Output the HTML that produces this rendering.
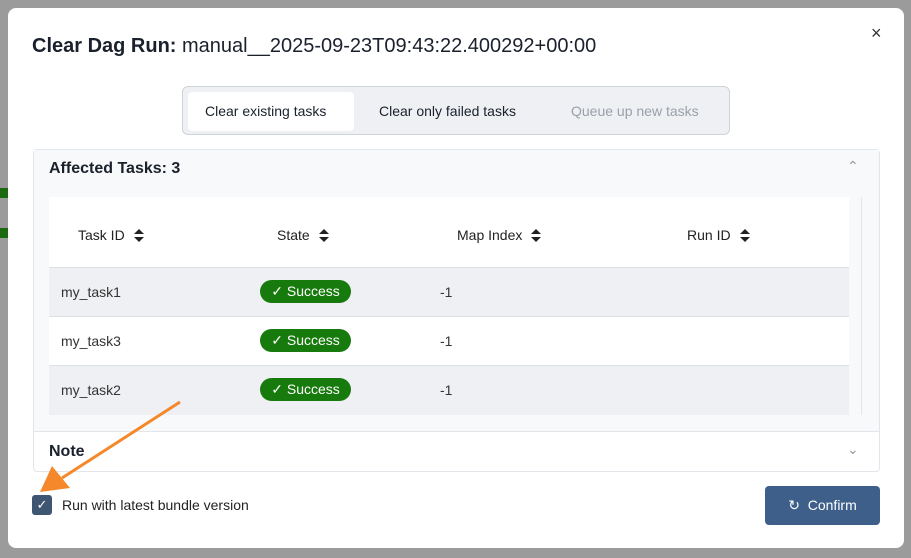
<!DOCTYPE html>
<html><head><style>
*{box-sizing:border-box;margin:0;padding:0}
body{width:911px;height:558px;background:#9b9b9b;font-family:"Liberation Sans",sans-serif;position:relative;overflow:hidden;color:#1a202c}
.a{position:absolute}
.modal{left:8px;top:8px;width:896px;height:540px;background:#fff;border-radius:8px}
.tab{font-size:14px;color:#1a202c;top:103px}
.badge{background:#177a0c;color:#fff;font-size:14px;border-radius:12px;width:91px;height:23px;line-height:23px;text-align:center}
.cell{font-size:14px;color:#333}
.th{font-size:14px;color:#222}
.sort{display:inline-block;vertical-align:middle;margin-left:9px;width:10px;height:14px;position:relative}
.sort:before{content:"";position:absolute;left:0;top:0;border:5px solid transparent;border-bottom:5px solid #222;border-top:0}
.sort:after{content:"";position:absolute;left:0;top:8px;border:5px solid transparent;border-top:5px solid #222;border-bottom:0}
</style></head><body>
<div class="a" style="left:0;top:188px;width:8px;height:10px;background:#1a6a12"></div>
<div class="a" style="left:0;top:228px;width:8px;height:10px;background:#1a6a12"></div>
<div class="a modal"></div>
<div class="a" style="left:871px;top:23px;font-size:18px;color:#333">×</div>
<div class="a" style="left:32px;top:35px;font-size:20px;color:#1a202c"><b>Clear Dag Run:</b> manual__2025-09-23T09:43:22.400292+00:00</div>
<div class="a" style="left:182px;top:86px;width:548px;height:49px;background:#eef0f3;border:1px solid #cfd4da;border-radius:6px"></div>
<div class="a" style="left:188px;top:92px;width:166px;height:39px;background:#fff;border-radius:4px"></div>
<div class="a tab" style="left:205px">Clear existing tasks</div>
<div class="a tab" style="left:379px">Clear only failed tasks</div>
<div class="a tab" style="left:571px;color:#9aa0aa">Queue up new tasks</div>
<div class="a" style="left:33px;top:149px;width:847px;height:323px;border:1px solid #e2e5e9;border-radius:4px;background:#fff"></div>
<div class="a" style="left:34px;top:150px;width:845px;height:281px;background:#f8f9fa"></div>
<div class="a" style="left:49px;top:160px;font-size:16px;font-weight:bold">Affected Tasks: 3</div>
<div class="a" style="left:847px;top:158px;font-size:14px;color:#999">&#8963;</div>
<div class="a" style="left:49px;top:197px;width:800px;height:218px;background:#fff"></div>
<div class="a" style="left:861px;top:197px;width:1px;height:218px;background:#e2e5e9"></div>
<div class="a th" style="left:78px;top:227px">Task ID<span class="sort"></span></div>
<div class="a th" style="left:277px;top:227px">State<span class="sort"></span></div>
<div class="a th" style="left:457px;top:227px">Map Index<span class="sort"></span></div>
<div class="a th" style="left:687px;top:227px">Run ID<span class="sort"></span></div>
<div class="a" style="left:49px;top:267px;width:800px;height:50px;background:#eef0f3;border-top:1px solid #dde1e6"></div>
<div class="a" style="left:49px;top:316px;width:800px;height:50px;background:#fff;border-top:1px solid #dde1e6"></div>
<div class="a" style="left:49px;top:365px;width:800px;height:50px;background:#eef0f3;border-top:1px solid #dde1e6"></div>
<div class="a cell" style="left:61px;top:284px">my_task1</div>
<div class="a cell" style="left:61px;top:333px">my_task3</div>
<div class="a cell" style="left:61px;top:382px">my_task2</div>
<div class="a badge" style="left:260px;top:280px">✓ Success</div>
<div class="a badge" style="left:260px;top:329px">✓ Success</div>
<div class="a badge" style="left:260px;top:378px">✓ Success</div>
<div class="a cell" style="left:440px;top:284px">-1</div>
<div class="a cell" style="left:440px;top:333px">-1</div>
<div class="a cell" style="left:440px;top:382px">-1</div>
<div class="a" style="left:34px;top:431px;width:845px;height:1px;background:#e2e5e9"></div>
<div class="a" style="left:49px;top:443px;font-size:16px;font-weight:bold">Note</div>
<div class="a" style="left:847px;top:441px;font-size:14px;color:#999">&#8964;</div>
<div class="a" style="left:32px;top:495px;width:20px;height:20px;background:#3f5672;border-radius:3px;color:#fff;font-size:13px;text-align:center;line-height:20px">✓</div>
<div class="a" style="left:62px;top:497px;font-size:14px;color:#222">Run with latest bundle version</div>
<div class="a" style="left:765px;top:486px;width:115px;height:39px;background:#3e5f8a;border-radius:4px;color:#fff;font-size:14px;line-height:39px;text-align:center">&#8635;&nbsp; Confirm</div>
<svg class="a" style="left:0;top:0" width="911" height="558">
<line x1="180" y1="402" x2="62" y2="478" stroke="#f5882a" stroke-width="3"/>
<polygon points="40,492 52,466 70,488" fill="#f5882a"/>
</svg>
</body></html>
